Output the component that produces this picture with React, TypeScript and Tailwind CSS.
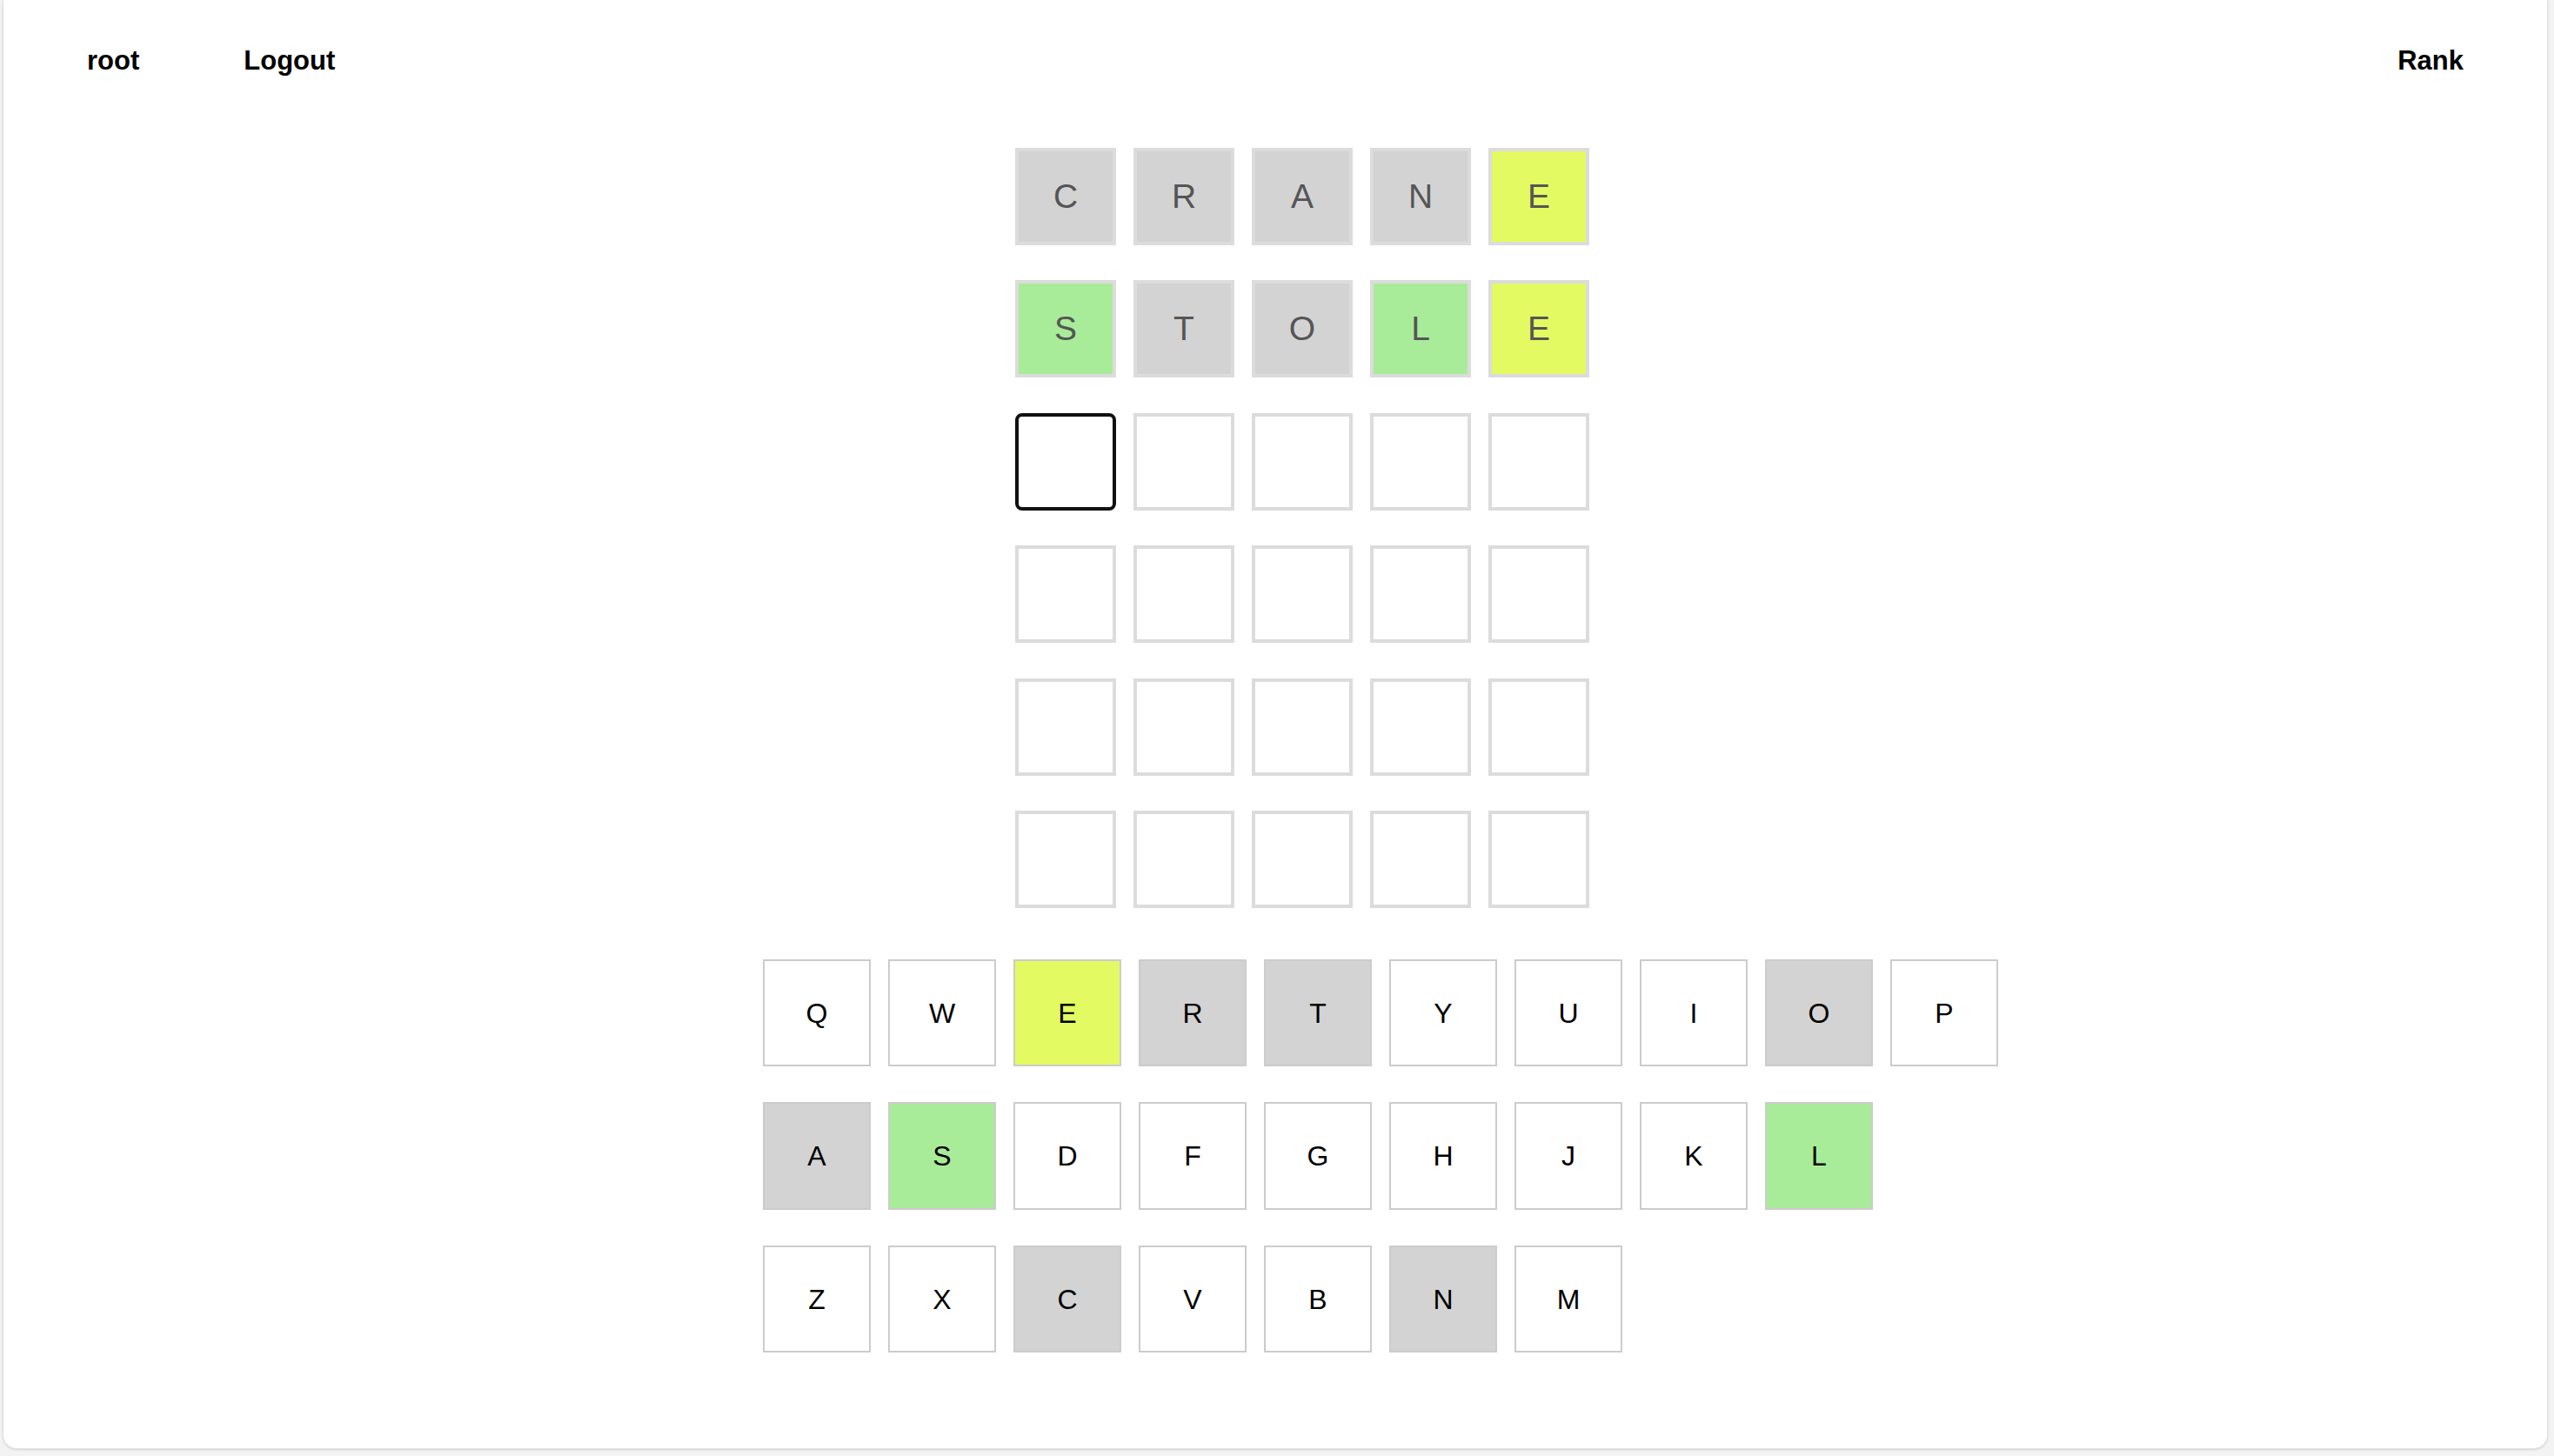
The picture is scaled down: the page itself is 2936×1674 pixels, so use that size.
import React from 'react'

type Mark = 'absent' | 'present' | 'correct' | 'none'

const guesses: { letter: string; mark: Mark }[][] = [
  [
    { letter: 'C', mark: 'absent' },
    { letter: 'R', mark: 'absent' },
    { letter: 'A', mark: 'absent' },
    { letter: 'N', mark: 'absent' },
    { letter: 'E', mark: 'present' },
  ],
  [
    { letter: 'S', mark: 'correct' },
    { letter: 'T', mark: 'absent' },
    { letter: 'O', mark: 'absent' },
    { letter: 'L', mark: 'correct' },
    { letter: 'E', mark: 'present' },
  ],
]

const keyRows = ['QWERTYUIOP', 'ASDFGHJKL', 'ZXCVBNM']

const keyMarks: Record<string, Mark> = {
  C: 'absent',
  R: 'absent',
  A: 'absent',
  N: 'absent',
  T: 'absent',
  O: 'absent',
  E: 'present',
  S: 'correct',
  L: 'correct',
}

const tileFill: Record<Mark, string> = {
  absent: 'bg-[#d3d3d3]',
  present: 'bg-[#e3fa62]',
  correct: 'bg-[#a8ec99]',
  none: 'bg-white',
}

function Tile({ letter, mark, active }: { letter?: string; mark: Mark; active?: boolean }) {
  return (
    <div
      className={`flex h-[112px] w-[116px] items-center justify-center border-[4px] text-[39px] text-[#555] ${
        active ? 'rounded-[8px] border-[#111]' : 'border-[#dcdcdc]'
      } ${tileFill[mark]}`}
    >
      {letter}
    </div>
  )
}

function Key({ letter }: { letter: string }) {
  const mark = keyMarks[letter] ?? 'none'
  return (
    <div
      className={`flex h-[123.5px] w-[124px] items-center justify-center border-2 border-[#cccccc] text-[32px] text-black ${tileFill[mark]}`}
    >
      {letter}
    </div>
  )
}

export default function App() {
  const rows = Array.from({ length: 6 }, (_, r) => guesses[r] ?? null)

  return (
    <div
      className="min-h-[1674px] bg-[#f3f3f3] pb-[8px] pl-[3px] pr-[7px]"
      style={{ fontFamily: '"Liberation Sans", Arial, sans-serif' }}
    >
      <div className="h-[1666px] rounded-b-[16px] border border-t-0 border-[#e2e2e2] bg-white shadow-sm">
        {/* Top bar */}
        <div className="flex items-center justify-between px-[96px] pt-[52px] text-[31px] font-bold leading-[35px] text-black">
          <div className="flex gap-[120px]">
            <span>root</span>
            <span>Logout</span>
          </div>
          <span>Rank</span>
        </div>

        {/* Board */}
        <div className="mt-[83px] flex flex-col gap-y-[40.4px] pl-[1163px]">
          {rows.map((row, r) => (
            <div key={r} className="flex gap-[20px]">
              {Array.from({ length: 5 }, (_, c) =>
                row ? (
                  <Tile key={c} letter={row[c].letter} mark={row[c].mark} />
                ) : (
                  <Tile key={c} mark="none" active={r === 2 && c === 0} />
                ),
              )}
            </div>
          ))}
        </div>

        {/* Keyboard */}
        <div className="mt-[59px] flex flex-col gap-y-[41px] pl-[873px]">
          {keyRows.map((row) => (
            <div key={row} className="flex gap-[20px]">
              {row.split('').map((k) => (
                <Key key={k} letter={k} />
              ))}
            </div>
          ))}
        </div>
      </div>
    </div>
  )
}
